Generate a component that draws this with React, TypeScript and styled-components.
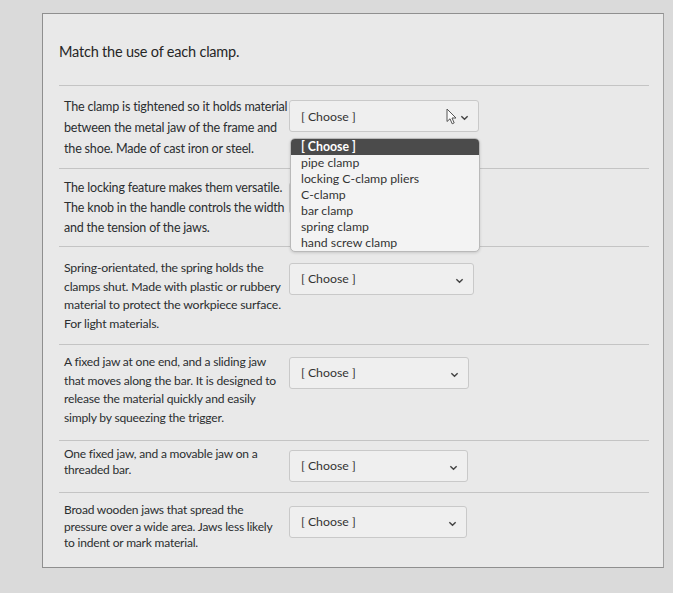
import React from 'react'
import styled, { createGlobalStyle } from 'styled-components'

const GlobalStyle = createGlobalStyle`
  html, body {
    margin: 0;
    padding: 0;
    background: #dadada;
    font-family: Lato, "Open Sans", sans-serif;
    color: #2b2e30;
  }
`

const Page = styled.div`
  padding: 13px 0 20px 42px;
  height: 593px;
  box-sizing: border-box;
  overflow: hidden;
`

const Card = styled.div`
  width: 622px;
  box-sizing: border-box;
  background: #e9e9e9;
  border: 1px solid #8f8f8f;
  border-right-color: #a0a0a0;
  padding: 28px 14px 0 16px;
`

const Title = styled.div`
  font-size: 14.5px;
  letter-spacing: -0.2px;
  line-height: 20px;
  color: #262626;
  margin-bottom: 23px;
`

const Row = styled.div<{ $fs: number; $lh: number; $pt: number; $pb: number }>`
  display: flex;
  align-items: flex-start;
  gap: 3px;
  border-top: 1px solid #c4c4c4;
  padding: ${p => p.$pt}px 0 ${p => p.$pb}px 5px;
  font-size: ${p => p.$fs}px;
  line-height: ${p => p.$lh}px;
  letter-spacing: -0.2px;
`

const Question = styled.div`
  width: 222px;
  flex-shrink: 0;
`

const Line = styled.div`
  white-space: nowrap;
`

const SelectWrap = styled.div`
  position: relative;
  margin-top: 4px;
`

const Select = styled.div<{ $w: number }>`
  width: ${p => p.$w}px;
  height: 32px;
  box-sizing: border-box;
  display: flex;
  align-items: center;
  justify-content: space-between;
  padding: 0 9px 0 11px;
  background: #efefef;
  border: 1px solid #c9c9c9;
  border-radius: 3px;
  font-size: 12.3px;
  letter-spacing: 0;
  color: #333;
`

const Chevron = styled.svg`
  width: 9px;
  height: 9px;
  margin-top: 3px;
`

const Cursor = styled.svg`
  position: absolute;
  right: 22px;
  top: 8px;
  width: 11px;
  height: 17px;
`

const Menu = styled.div`
  position: absolute;
  top: 38px;
  left: 1px;
  width: 188px;
  background: #f3f3f3;
  border: 1px solid #b9b9b9;
  border-radius: 5px;
  overflow: hidden;
  box-shadow: 0 1px 3px rgba(0, 0, 0, 0.15);
  z-index: 2;
`

const Option = styled.div<{ $active?: boolean }>`
  height: 16px;
  line-height: 16px;
  padding-left: 10px;
  font-size: 12.3px;
  letter-spacing: 0;
  color: ${p => (p.$active ? '#fff' : '#333')};
  background: ${p => (p.$active ? '#4b4b4b' : 'transparent')};
  font-weight: ${p => (p.$active ? 700 : 400)};
`

const options = [
  'pipe clamp',
  'locking C-clamp pliers',
  'C-clamp',
  'bar clamp',
  'spring clamp',
  'hand screw clamp',
]

const rows = [
  {
    lines: [
      'The clamp is tightened so it holds material',
      'between the metal jaw of the frame and',
      'the shoe. Made of cast iron or steel.',
    ],
    fs: 12.6, lh: 21, pt: 10, pb: 9, w: 190, open: true,
  },
  {
    lines: [
      'The locking feature makes them versatile.',
      'The knob in the handle controls the width',
      'and the tension of the jaws.',
    ],
    fs: 12.5, lh: 20, pt: 9, pb: 8, w: 188,
  },
  {
    lines: [
      'Spring-orientated, the spring holds the',
      'clamps shut. Made with plastic or rubbery',
      'material to protect the workpiece surface.',
      'For light materials.',
    ],
    fs: 12.3, lh: 18.5, pt: 12, pb: 11, w: 185,
  },
  {
    lines: [
      'A fixed jaw at one end, and a sliding jaw',
      'that moves along the bar. It is designed to',
      'release the material quickly and easily',
      'simply by squeezing the trigger.',
    ],
    fs: 12.1, lh: 18.5, pt: 8, pb: 13, w: 180,
  },
  {
    lines: ['One fixed jaw, and a movable jaw on a', 'threaded bar.'],
    fs: 12, lh: 15.5, pt: 5, pb: 10, w: 179,
  },
  {
    lines: [
      'Broad wooden jaws that spread the',
      'pressure over a wide area. Jaws less likely',
      'to indent or mark material.',
    ],
    fs: 12, lh: 16.5, pt: 9, pb: 15, w: 178,
  },
]

function App() {
  return (
    <Page>
      <GlobalStyle />
      <Card>
        <Title>Match the use of each clamp.</Title>
        {rows.map((r, i) => (
          <Row key={i} $fs={r.fs} $lh={r.lh} $pt={r.pt} $pb={r.pb}>
            <Question>
              {r.lines.map(l => (
                <Line key={l}>{l}</Line>
              ))}
            </Question>
            <SelectWrap>
              <Select $w={r.w}>
                <span>[ Choose ]</span>
                <Chevron viewBox="0 0 10 10">
                  <path d="M1.5 3.5 L5 7 L8.5 3.5" fill="none" stroke="#444" strokeWidth="1.6" />
                </Chevron>
              </Select>
              {r.open && (
                <>
                  <Cursor viewBox="0 0 11 17">
                    <path
                      d="M1 1 L1 13.5 L4 10.8 L6.2 15.8 L8.2 14.9 L6 10 L10 10 Z"
                      fill="#fafafa"
                      stroke="#555"
                      strokeWidth="1"
                      strokeLinejoin="round"
                    />
                  </Cursor>
                  <Menu>
                    <Option $active>[ Choose ]</Option>
                    {options.map(o => (
                      <Option key={o}>{o}</Option>
                    ))}
                  </Menu>
                </>
              )}
            </SelectWrap>
          </Row>
        ))}
      </Card>
    </Page>
  )
}

export default App
